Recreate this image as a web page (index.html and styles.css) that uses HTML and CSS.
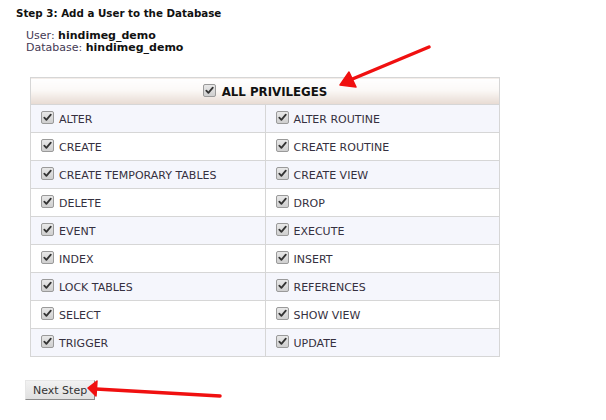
FILE: index.html
```html
<!DOCTYPE html>
<html>
<head>
<meta charset="utf-8">
<link rel="stylesheet" href="styles.css">
</head>
<body>
<div class="page">
  <h1 class="title">Step 3: Add a User to the Database</h1>
  <div class="info">
    <div>User: <b>hindimeg_demo</b></div>
    <div>Database: <b>hindimeg_demo</b></div>
  </div>
  <table class="privs">
    <thead>
      <tr><th colspan="2"><span class="cb"></span>ALL PRIVILEGES</th></tr>
    </thead>
    <tbody>
      <tr><td><span class="cb"></span>ALTER</td><td><span class="cb"></span>ALTER ROUTINE</td></tr>
      <tr><td><span class="cb"></span>CREATE</td><td><span class="cb"></span>CREATE ROUTINE</td></tr>
      <tr><td><span class="cb"></span>CREATE TEMPORARY TABLES</td><td><span class="cb"></span>CREATE VIEW</td></tr>
      <tr><td><span class="cb"></span>DELETE</td><td><span class="cb"></span>DROP</td></tr>
      <tr><td><span class="cb"></span>EVENT</td><td><span class="cb"></span>EXECUTE</td></tr>
      <tr><td><span class="cb"></span>INDEX</td><td><span class="cb"></span>INSERT</td></tr>
      <tr><td><span class="cb"></span>LOCK TABLES</td><td><span class="cb"></span>REFERENCES</td></tr>
      <tr><td><span class="cb"></span>SELECT</td><td><span class="cb"></span>SHOW VIEW</td></tr>
      <tr><td><span class="cb"></span>TRIGGER</td><td><span class="cb"></span>UPDATE</td></tr>
    </tbody>
  </table>
  <button class="next">Next Step</button>
</div>
<svg class="arrows" width="606" height="420" viewBox="0 0 606 420">
  <g fill="#f01010" stroke="#f01010" stroke-linecap="round" stroke-linejoin="round">
    <line x1="429" y1="47" x2="350" y2="80" stroke-width="3.5"/>
    <polygon points="340,85 349,72 356,87" stroke-width="1.5"/>
    <line x1="220" y1="396" x2="96" y2="389" stroke-width="3.5"/>
    <polygon points="88,388 97,381 96,396" stroke-width="1.5"/>
  </g>
</svg>
</body>
</html>
```
FILE: styles.css
```css
html, body {
  margin: 0;
  padding: 0;
  background: #fff;
}
body {
  font-family: "DejaVu Sans", Verdana, sans-serif;
  color: #333;
  font-size: 11px;
  width: 606px;
  height: 420px;
  overflow: hidden;
  position: relative;
}
.page {
  padding: 5px 0 0 16px;
}
.title {
  margin: 0;
  font-size: 10.3px;
  font-weight: bold;
  color: #111;
  line-height: 16px;
}
.info {
  margin: 9px 0 0 10px;
  line-height: 12px;
  color: #443a55;
}
.info b {
  color: #111;
}
.privs {
  margin: 23px 0 0 14px;
  border-collapse: collapse;
  width: 470px;
  border: 1px solid #d6d6d6;
}
.privs th {
  height: 26px;
  padding: 0;
  font-size: 11.8px;
  font-weight: bold;
  color: #111;
  text-align: center;
  background: linear-gradient(#ffffff 0%, #fbf9f7 45%, #e7dad2 100%);
  border-bottom: 1px solid #d6d6d6;
}
.privs td {
  height: 27px;
  padding: 0 0 0 10px;
  border: 1px solid #d6d6d6;
  width: 50%;
  color: #353040;
  white-space: nowrap;
}
.privs tbody tr:nth-child(odd) td {
  background: #f5f6fc;
}
.privs tbody tr:nth-child(even) td {
  background: #ffffff;
}
.cb {
  display: inline-block;
  width: 11px;
  height: 11px;
  margin-right: 5px;
  vertical-align: -1px;
  border: 1px solid #9a9a9a;
  border-radius: 2px;
  background:
    url("data:image/svg+xml;utf8,<svg xmlns='http://www.w3.org/2000/svg' width='11' height='11' viewBox='0 0 11 11'><path d='M2.3 5.6 L4.4 7.8 L8.8 2.6' fill='none' stroke='%23333' stroke-width='1.8' stroke-linecap='round' stroke-linejoin='round'/></svg>") no-repeat center,
    linear-gradient(#e8e8e8, #cfcfcf);
}
.privs th .cb {
  margin-right: 6px;
}
.next {
  display: block;
  margin: 23px 0 0 9px;
  height: 20px;
  padding: 0 7px;
  font-family: "DejaVu Sans", Verdana, sans-serif;
  font-size: 11px;
  color: #333;
  background: linear-gradient(#f2f2f2, #e0e0e0);
  border: 1px solid;
  border-color: #e6e6e6 #8a8a8a #8a8a8a #e6e6e6;
  border-radius: 0;
}
.arrows {
  position: absolute;
  left: 0;
  top: 0;
  pointer-events: none;
}
```
